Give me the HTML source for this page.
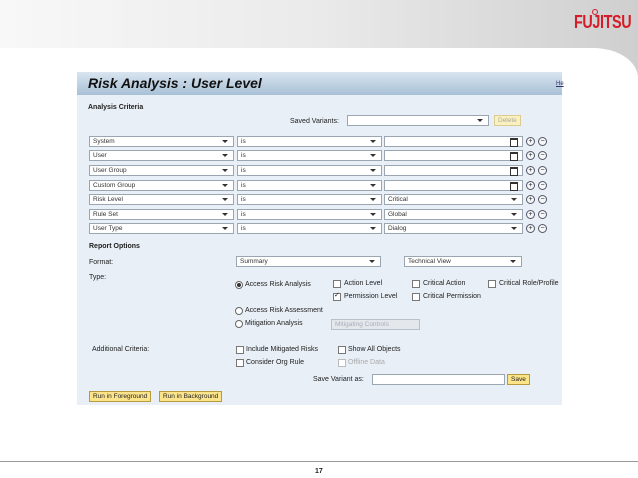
<!DOCTYPE html>
<html><head><style>
*{margin:0;padding:0;box-sizing:border-box}
body{width:638px;height:478px;position:relative;overflow:hidden;background:#fff;font-family:"Liberation Sans",Arial,sans-serif;font-size:7px;color:#222}
.a{position:absolute;white-space:nowrap}
.f{position:absolute;height:11px;background:#fff;border:1px solid #9aa6b2;padding-left:3px;line-height:9px;font-size:6.5px;color:#333}
.dd::after{content:"";position:absolute;right:5px;top:3px;border-left:3px solid transparent;border-right:3px solid transparent;border-top:3px solid #333}
.cp::after{content:"";position:absolute;right:4px;top:1px;width:6px;height:6px;border:1px solid #333;border-top-width:2px;background:#fff}
.ic{position:absolute;width:9px;height:9px;border:1px solid #556;border-radius:50%;font-size:7px;line-height:7px;text-align:center;color:#222;background:#f4f6f8}
.cb{position:absolute;width:8px;height:8px;border:1px solid #777;background:#fff}
.rb{position:absolute;width:8px;height:8px;border:1px solid #666;border-radius:50%;background:#fff}
.btn{position:absolute;height:11px;background:#fbe48a;border:1px solid #b59b3c;font-size:6.5px;line-height:9px;padding:0 3px;color:#222}
</style></head><body>
<div class="a" style="left:0;top:0;width:638px;height:90px;background:linear-gradient(90deg,#f8f8f8 0%,#eaeaea 50%,#cfcfcf 100%)"></div>
<div class="a" style="left:0;top:48px;width:638px;height:430px;background:#fff;border-top-right-radius:45px 30px"></div>
<div class="a" style="left:574px;top:12px;font-size:18px;color:#d51c29;letter-spacing:-0.5px;transform:scaleX(0.8);transform-origin:left;font-weight:bold">FUJITSU</div>
<div class="a" style="left:592px;top:9px;width:6px;height:6px;border:1px solid #d51c29;border-radius:50%"></div>

<div class="a" style="left:77px;top:72px;width:485px;height:333px;background:#e8eff6"></div>
<div class="a" style="left:77px;top:72px;width:485px;height:23px;background:linear-gradient(#d9e5f0,#a8c0d6)"></div>
<div class="a" style="left:88px;top:75px;font-size:14px;font-weight:bold;font-style:italic;color:#111">Risk Analysis : User Level</div>
<div class="a" style="left:556px;top:81px;font-size:6px;color:#336;text-decoration:underline">He</div>
<div class="a" style="left:88px;top:104px;font-weight:bold">Analysis Criteria</div>
<div class="a" style="left:290px;top:118px">Saved Variants:</div>
<div class="f dd" style="left:347px;top:115px;width:142px"></div>
<div class="btn" style="left:494px;top:115px;color:#aa9;background:#fbf0c0;border-color:#d8cc90">Delete</div>

<div class="f dd" style="left:89px;top:136px;width:145px">System</div><div class="f dd" style="left:237px;top:136px;width:145px">is</div><div class="f cp" style="left:384px;top:136px;width:139px"></div><div class="ic" style="left:526px;top:137px">+</div><div class="ic" style="left:538px;top:137px">−</div>
<div class="f dd" style="left:89px;top:150px;width:145px">User</div><div class="f dd" style="left:237px;top:150px;width:145px">is</div><div class="f cp" style="left:384px;top:150px;width:139px"></div><div class="ic" style="left:526px;top:151px">+</div><div class="ic" style="left:538px;top:151px">−</div>
<div class="f dd" style="left:89px;top:165px;width:145px">User Group</div><div class="f dd" style="left:237px;top:165px;width:145px">is</div><div class="f cp" style="left:384px;top:165px;width:139px"></div><div class="ic" style="left:526px;top:166px">+</div><div class="ic" style="left:538px;top:166px">−</div>
<div class="f dd" style="left:89px;top:180px;width:145px">Custom Group</div><div class="f dd" style="left:237px;top:180px;width:145px">is</div><div class="f cp" style="left:384px;top:180px;width:139px"></div><div class="ic" style="left:526px;top:181px">+</div><div class="ic" style="left:538px;top:181px">−</div>
<div class="f dd" style="left:89px;top:194px;width:145px">Risk Level</div><div class="f dd" style="left:237px;top:194px;width:145px">is</div><div class="f dd" style="left:384px;top:194px;width:139px">Critical</div><div class="ic" style="left:526px;top:195px">+</div><div class="ic" style="left:538px;top:195px">−</div>
<div class="f dd" style="left:89px;top:209px;width:145px">Rule Set</div><div class="f dd" style="left:237px;top:209px;width:145px">is</div><div class="f dd" style="left:384px;top:209px;width:139px">Global</div><div class="ic" style="left:526px;top:210px">+</div><div class="ic" style="left:538px;top:210px">−</div>
<div class="f dd" style="left:89px;top:223px;width:145px">User Type</div><div class="f dd" style="left:237px;top:223px;width:145px">is</div><div class="f dd" style="left:384px;top:223px;width:139px">Dialog</div><div class="ic" style="left:526px;top:224px">+</div><div class="ic" style="left:538px;top:224px">−</div>

<div class="a" style="left:89px;top:243px;font-weight:bold">Report Options</div>
<div class="a" style="left:89px;top:259px">Format:</div>
<div class="f dd" style="left:236px;top:256px;width:145px">Summary</div>
<div class="f dd" style="left:404px;top:256px;width:118px">Technical View</div>
<div class="a" style="left:89px;top:274px">Type:</div>
<div class="rb" style="left:235px;top:281px"></div><div class="a" style="left:237px;top:283px;width:4px;height:4px;border-radius:50%;background:#333"></div>
<div class="a" style="left:245px;top:281px">Access Risk Analysis</div>
<div class="cb" style="left:333px;top:280px"></div><div class="a" style="left:344px;top:280px">Action Level</div>
<div class="cb" style="left:412px;top:280px"></div><div class="a" style="left:423px;top:280px">Critical Action</div>
<div class="cb" style="left:488px;top:280px"></div><div class="a" style="left:499px;top:280px">Critical Role/Profile</div>
<div class="cb" style="left:333px;top:293px"></div><div class="a" style="left:334px;top:291px;font-size:7px">✓</div><div class="a" style="left:344px;top:293px">Permission Level</div>
<div class="cb" style="left:412px;top:293px"></div><div class="a" style="left:423px;top:293px">Critical Permission</div>
<div class="rb" style="left:235px;top:307px"></div><div class="a" style="left:245px;top:307px">Access Risk Assessment</div>
<div class="rb" style="left:235px;top:320px"></div><div class="a" style="left:245px;top:320px">Mitigation Analysis</div>
<div class="f" style="left:331px;top:319px;width:89px;background:#e4e8ec;color:#aab;border-color:#b8c0c8">Mitigating Controls</div>

<div class="a" style="left:92px;top:346px">Additional Criteria:</div>
<div class="cb" style="left:236px;top:346px"></div><div class="a" style="left:246px;top:346px">Include Mitigated Risks</div>
<div class="cb" style="left:338px;top:346px"></div><div class="a" style="left:348px;top:346px">Show All Objects</div>
<div class="cb" style="left:236px;top:359px"></div><div class="a" style="left:246px;top:359px">Consider Org Rule</div>
<div class="cb" style="left:338px;top:359px;border-color:#bbb"></div><div class="a" style="left:348px;top:359px;color:#aaa">Offline Data</div>
<div class="a" style="left:313px;top:376px">Save Variant as:</div>
<div class="f" style="left:372px;top:374px;width:133px"></div>
<div class="btn" style="left:507px;top:374px">Save</div>
<div class="btn" style="left:89px;top:391px">Run in Foreground</div>
<div class="btn" style="left:159px;top:391px">Run in Background</div>

<div class="a" style="left:0;top:461px;width:638px;height:1px;background:#999"></div>
<div class="a" style="left:315px;top:468px;font-size:7px;font-weight:bold">17</div>
</body></html>
